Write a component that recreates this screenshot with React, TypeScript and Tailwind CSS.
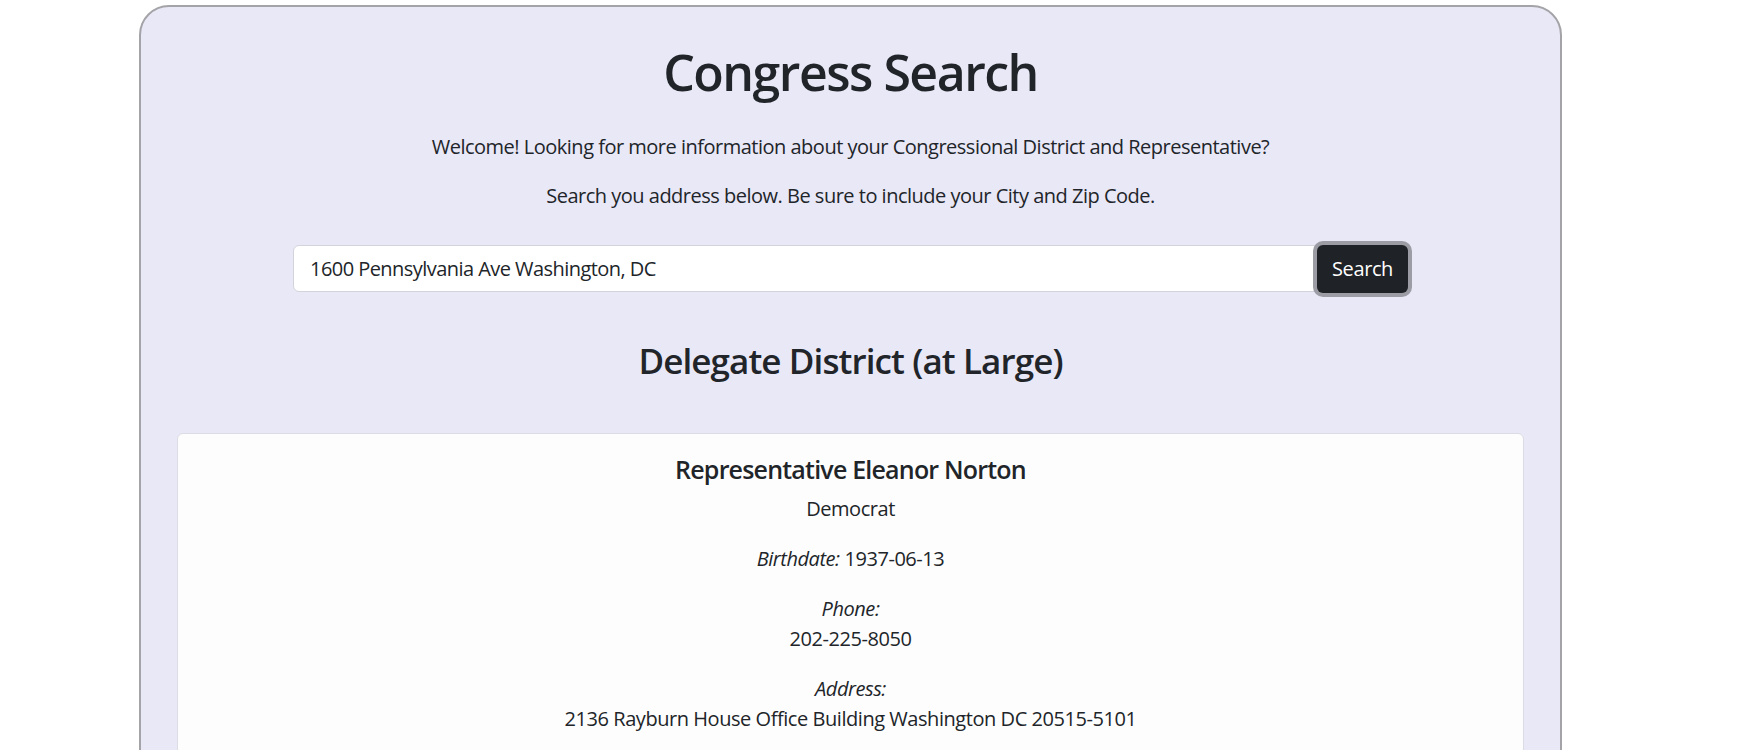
export default function App() {
  return (
    <div className="min-h-screen bg-white pt-[5px] font-['Open_Sans',sans-serif] text-[#212529]">
      <div className="ml-[139px] w-[1423px] rounded-[30px] border-2 border-[#a4a4a8] bg-[#e9e8f7] px-[36px] pb-[60px] pt-[35px]">
        <h1 className="text-center text-[50px] font-semibold leading-[1.2] tracking-[-1.5px]">
          Congress Search
        </h1>

        <p className="mt-[30px] text-center text-[20px] leading-[30px] tracking-[-0.5px]">
          Welcome! Looking for more information about your Congressional
          District and Representative?
        </p>
        <p className="mt-[19px] text-center text-[20px] leading-[30px] tracking-[-0.5px]">
          Search you address below. Be sure to include your City and Zip Code.
        </p>

        <form
          className="mx-auto mt-[34px] flex h-[48px] w-[1115px]"
          onSubmit={(e) => e.preventDefault()}
        >
          <input
            type="text"
            defaultValue="1600 Pennsylvania Ave Washington, DC"
            className="h-[47px] min-w-0 flex-1 rounded-l-[6px] border border-[#d3d3dc] bg-white px-[16px] text-[20px] tracking-[-0.55px] text-[#212529] outline-none"
          />
          <button
            type="submit"
            className="relative h-[48px] w-[91px] rounded-[6px] bg-[#1f2226] text-[20px] tracking-[-0.4px] text-white shadow-[0_0_0_4px_#9b9ca4]"
          >
            Search
          </button>
        </form>

        <h3 className="mt-[47px] text-center text-[35px] font-semibold leading-[1.2] tracking-[-0.9px]">
          Delegate District (at Large)
        </h3>

        <div className="mt-[51px] rounded-[6px] border border-[#dcdce4] bg-[#fdfdfd] p-[20px] text-center text-[20px] leading-[30px] tracking-[-0.45px]">
          <h5 className="text-[25px] font-semibold leading-[30px] tracking-[-0.8px]">
            Representative Eleanor Norton
          </h5>
          <p className="mt-[10px]">Democrat</p>
          <p className="mt-[20px]">
            <em>Birthdate:</em> 1937-06-13
          </p>
          <p className="mt-[20px]">
            <em>Phone:</em>
            <br />
            202-225-8050
          </p>
          <p className="mt-[20px]">
            <em>Address:</em>
            <br />
            2136 Rayburn House Office Building Washington DC 20515-5101
          </p>
        </div>
      </div>
    </div>
  );
}
